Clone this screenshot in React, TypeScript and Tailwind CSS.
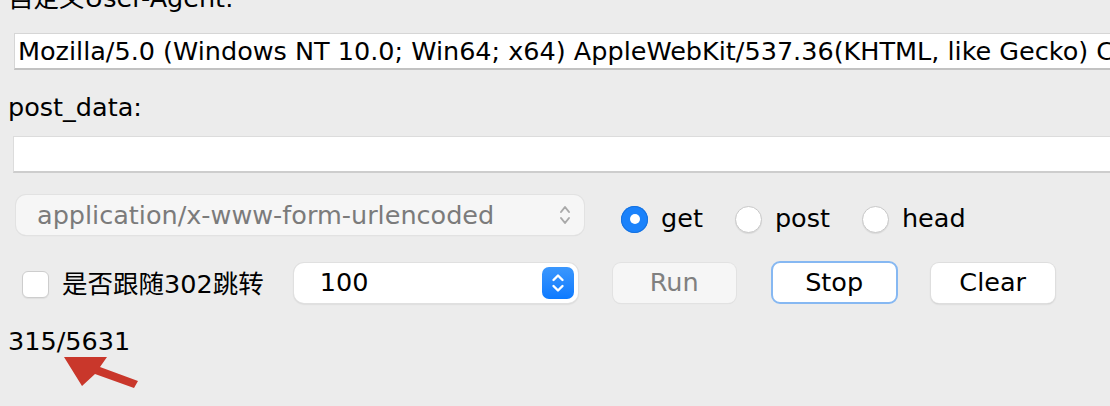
import React from "react";

const font = { fontFamily: '"DejaVu Sans", "Noto Sans CJK SC", sans-serif' };

function Radio({ checked, label }: { checked?: boolean; label: string }) {
  return (
    <div className="flex items-center gap-[13px]">
      {checked ? (
        <div className="w-[27px] h-[27px] rounded-full bg-[#1a82fb] flex items-center justify-center shadow-[inset_0_0_0_1px_#1672e0]">
          <div className="w-[10px] h-[10px] rounded-full bg-white" />
        </div>
      ) : (
        <div className="w-[27px] h-[27px] rounded-full bg-white border border-[#c8c8c8] shadow-[0_1px_1px_rgba(0,0,0,0.08)]" />
      )}
      <span className="text-[25.5px] text-black leading-none">{label}</span>
    </div>
  );
}

export default function App() {
  return (
    <div
      className="relative w-[1110px] h-[406px] overflow-hidden bg-[#ececec] text-black text-[25.5px]"
      style={font}
    >
      <div className="mt-[-17px] pl-[8px] leading-[30px]">自定义User-Agent:</div>
      <div className="mt-[20px] ml-[14px] w-[1200px] h-[37px] bg-white border border-[#d6d6d6] border-b-2 border-b-[#c2c2c2] pl-[3px] flex items-center whitespace-nowrap overflow-hidden">
        Mozilla/5.0 (Windows NT 10.0; Win64; x64) AppleWebKit/537.36(KHTML, like Gecko) Chrome/70.0.3538.102 Safari/537.36
      </div>
      <div className="mt-[22px] pl-[8px] leading-[30px]">post_data:</div>
      <div className="mt-[14px] ml-[13px] w-[1200px] h-[37px] bg-white border border-[#dcdcdc] border-b-2 border-b-[#cdcdcd]" />

      <div className="mt-[22px] flex items-center">
        <div className="ml-[16px] w-[568px] h-[40px] rounded-[10px] bg-[#f6f6f6] shadow-[0_0_0_1px_#e2e2e2,0_1px_1px_rgba(0,0,0,0.12)] flex items-center justify-between pl-[21px] pr-[13px]">
          <span className="text-[#7b7b7b]">application/x-www-form-urlencoded</span>
          <svg width="12" height="24" viewBox="0 0 12 24" fill="none" stroke="#a9a9a9" strokeWidth="2" strokeLinecap="round" strokeLinejoin="round">
            <path d="M2 9 L6 4 L10 9" />
            <path d="M2 15 L6 20 L10 15" />
          </svg>
        </div>
        <div className="ml-[37px] mt-[8px] flex items-center gap-[32px]">
          <Radio checked label="get" />
          <Radio label="post" />
          <Radio label="head" />
        </div>
      </div>

      <div className="mt-[26px] flex items-center">
        <div className="ml-[22px] mt-[4px] w-[27px] h-[27px] rounded-[6px] bg-white border border-[#cdcdcd] shadow-[0_1px_1px_rgba(0,0,0,0.06)]" />
        <span className="ml-[13px] mt-[3px]">是否跟随302跳转</span>
        <div className="ml-[30px] w-[284px] h-[40px] rounded-[10px] bg-white shadow-[0_0_0_1px_#e0e0e0,0_1px_2px_rgba(0,0,0,0.2)] flex items-center justify-between pl-[26px] pr-[4px]">
          <span>100</span>
          <div className="w-[32px] h-[32px] rounded-[7px] bg-gradient-to-b from-[#3a97fd] to-[#0a7aff] flex items-center justify-center">
            <svg width="14" height="24" viewBox="0 0 14 24" fill="none" stroke="white" strokeWidth="2.4" strokeLinecap="round" strokeLinejoin="round">
              <path d="M2.5 9 L7 4.5 L11.5 9" />
              <path d="M2.5 15 L7 19.5 L11.5 15" />
            </svg>
          </div>
        </div>
        <button className="ml-[35px] w-[123px] h-[40px] rounded-[8px] bg-[#f6f6f6] shadow-[0_0_0_1px_#e2e2e2,0_1px_1px_rgba(0,0,0,0.08)] text-[#808080]">
          Run
        </button>
        <button className="ml-[35px] w-[127px] h-[43px] rounded-[9px] bg-white border-2 border-[#86b8f2] text-black">
          Stop
        </button>
        <button className="ml-[33px] w-[124px] h-[40px] rounded-[8px] bg-white shadow-[0_0_0_1px_#dedede,0_1px_2px_rgba(0,0,0,0.22)] text-black">
          Clear
        </button>
      </div>

      <div className="mt-[22px] pl-[8px] leading-[30px]">315/5631</div>

      <svg className="absolute left-[55px] top-[350px]" width="90" height="40" viewBox="0 0 90 40">
        <polygon points="9,7 52,7 45,17 83,31 79,38 40,24 27,36" fill="#c9372b" />
      </svg>
    </div>
  );
}
